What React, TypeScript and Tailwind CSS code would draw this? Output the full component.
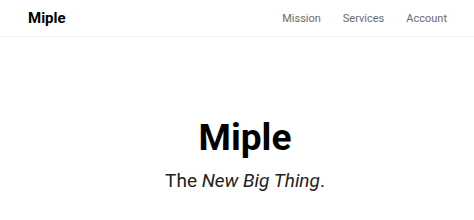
export default function App() {
  return (
    <div className="min-h-screen bg-white font-['Roboto',sans-serif] text-black">
      <header className="flex h-[37px] items-center justify-between border-b border-[#f0f0f0] pl-[28px] pr-[27px]">
        <span className="text-[15px] font-bold">Miple</span>
        <nav className="flex gap-[22px] pt-[2px] text-[11px] text-[#6b6b6b]">
          <a>Mission</a>
          <a>Services</a>
          <a>Account</a>
        </nav>
      </header>
      <main className="flex flex-col items-center pl-[16px] pt-[80px]">
        <h1 className="text-[37px] font-bold leading-[42px]">Miple</h1>
        <p className="mt-[8px] text-[19px] text-[#222]">
          The <em>New Big Thing</em>.
        </p>
      </main>
    </div>
  )
}
